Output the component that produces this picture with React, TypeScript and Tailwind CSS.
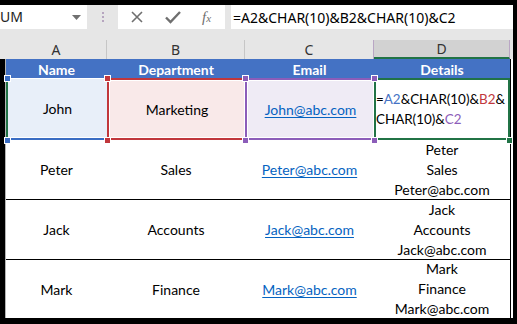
import React from 'react';

type Person = { name: string; dept: string; email: string };

const people: Person[] = [
  { name: 'Peter', dept: 'Sales', email: 'Peter@abc.com' },
  { name: 'Jack', dept: 'Accounts', email: 'Jack@abc.com' },
  { name: 'Mark', dept: 'Finance', email: 'Mark@abc.com' },
];

const cellFont = { fontFamily: 'Lato, "Open Sans", sans-serif' };
const chromeFont = { fontFamily: '"Noto Sans", "Open Sans", sans-serif' };

const Handle: React.FC<{ x: number; y: number; color: string }> = ({ x, y, color }) => (
  <div
    className="absolute w-[7px] h-[7px] border border-white z-10"
    style={{ left: x - 3, top: y - 3, backgroundColor: color }}
  />
);

const FormulaBar: React.FC = () => (
  <div className="h-[24px] flex" style={chromeFont}>
    <div className="w-[87px] bg-white flex items-center justify-between pr-[6px] overflow-hidden">
      <span className="text-[14px] text-[#222] leading-none">UM</span>
      <svg width="9" height="5" viewBox="0 0 9 5">
        <path d="M0 0 L9 0 L4.5 5 Z" fill="#707070" />
      </svg>
    </div>
    <div className="w-[31px] flex flex-col items-center justify-center gap-[2px]">
      <div className="w-[2px] h-[2px] bg-[#b6a5bf]" />
      <div className="w-[2px] h-[2px] bg-[#b6a5bf]" />
      <div className="w-[2px] h-[2px] bg-[#b6a5bf]" />
    </div>
    <div className="w-[107px] bg-white flex items-center pl-[13px]">
      <svg width="12" height="12" viewBox="0 0 12 12">
        <path d="M1 1 L11 11 M11 1 L1 11" stroke="#6f6f6f" strokeWidth="1.6" />
      </svg>
      <svg width="16" height="14" viewBox="0 0 16 14" className="ml-[22px]">
        <path d="M1 7.5 L5.5 12 L15 2" stroke="#6f6f6f" strokeWidth="2.4" fill="none" />
      </svg>
      <span
        className="ml-[21px] text-[15px] italic text-[#6f6f6f] leading-none"
        style={{ fontFamily: '"Liberation Serif", serif' }}
      >
        f<span className="text-[11px]">x</span>
      </span>
    </div>
    <div className="w-[6px]" />
    <div className="flex-1 bg-white flex items-center pl-[2px]">
      <span className="text-[14px] text-black">=A2&amp;CHAR(10)&amp;B2&amp;CHAR(10)&amp;C2</span>
    </div>
  </div>
);

const ColumnHeaders: React.FC = () => (
  <div className="h-[19px] flex text-[14px] text-[#333]" style={chromeFont}>
    <div className="w-[6px]" />
    <div className="w-[101px] flex items-center justify-center border-r border-[#c6c6c6]">A</div>
    <div className="w-[138px] flex items-center justify-center border-r border-[#c6c6c6]">B</div>
    <div className="w-[129px] flex items-center justify-center border-r border-[#b9a6c4]">C</div>
    <div className="w-[136px] flex items-center justify-center bg-[#d2d2d2] border-b-2 border-[#217346] border-r border-r-[#b9a6c4]">
      D
    </div>
  </div>
);

export default function App() {
  return (
    <div className="w-[517px] h-[324px] bg-black overflow-hidden pt-[5px]">
      <div className="w-[513px] h-[313px] bg-[#e6e6e6] flex flex-col">
        <FormulaBar />
        <div className="h-[11px]" />
        <ColumnHeaders />
        <div className="flex flex-1 min-h-0" style={cellFont}>
          <div className="w-[5px] bg-black" />
          <div className="w-[1px] bg-[#b4b4b4]" />
          <div className="w-[504px] flex flex-col bg-white text-[14px] text-black">
            <div className="h-[19px] flex bg-[#4472c4] text-white font-bold pt-[1px]">
              <div className="w-[101px] flex items-center justify-center">Name</div>
              <div className="w-[138px] flex items-center justify-center">Department</div>
              <div className="w-[129px] flex items-center justify-center">Email</div>
              <div className="w-[136px] flex items-center justify-center">Details</div>
            </div>

            <div className="h-[62px] flex relative">
              <div className="w-[101px] flex items-center justify-center bg-[#e8eff9] border-l-2 border-l-[#217346] border-t border-t-white border-b-2 border-b-[#3a6dc3] shadow-[inset_0_-1px_0_white]">
                John
              </div>
              <div className="w-[138px] flex items-center justify-center bg-[#f9e9e9] border-2 border-r-0 border-[#c1373c] shadow-[inset_0_0_0_1px_white]">
                Marketing
              </div>
              <div className="w-[129px] flex items-center justify-center bg-[#efebf5] border-2 border-r-0 border-[#8c5db9] shadow-[inset_0_0_0_1px_white]">
                <span className="text-[#0563c1] underline underline-offset-2">John@abc.com</span>
              </div>
              <div className="w-[136px] flex flex-col justify-center border-2 border-[#217346] text-[13.4px] leading-[20px]">
                <div className="whitespace-nowrap">
                  =<span className="text-[#4472c4]">A2</span>&amp;CHAR(10)&amp;
                  <span className="text-[#c1373c]">B2</span>&amp;
                </div>
                <div className="whitespace-nowrap">
                  CHAR(10)&amp;<span className="text-[#8c5db9]">C2</span>
                </div>
              </div>
              <Handle x={1} y={0} color="#3a6dc3" />
              <Handle x={1} y={62} color="#3a6dc3" />
              <Handle x={101} y={0} color="#c1373c" />
              <Handle x={101} y={62} color="#c1373c" />
              <Handle x={239} y={0} color="#8c5db9" />
              <Handle x={239} y={62} color="#8c5db9" />
              <Handle x={368} y={0} color="#8c5db9" />
              <Handle x={368} y={62} color="#8c5db9" />
              <Handle x={503} y={62} color="#217346" />
            </div>

            {people.map((p, i) => (
              <div
                key={p.name}
                className={`flex ${i < people.length - 1 ? 'h-[60px] border-b border-black' : 'flex-1 min-h-0'}`}
              >
                <div className="w-[101px] flex items-center justify-center">{p.name}</div>
                <div className="w-[138px] flex items-center justify-center">{p.dept}</div>
                <div className="w-[129px] flex items-center justify-center">
                  <span className="text-[#0563c1] underline underline-offset-2">{p.email}</span>
                </div>
                <div className="w-[136px] flex flex-col items-center justify-center leading-[20px]">
                  <div>{p.name}</div>
                  <div>{p.dept}</div>
                  <div>{p.email}</div>
                </div>
              </div>
            ))}
          </div>
          <div className="w-[1px] bg-black" />
          <div className="w-[2px] bg-white" />
        </div>
      </div>
    </div>
  );
}
